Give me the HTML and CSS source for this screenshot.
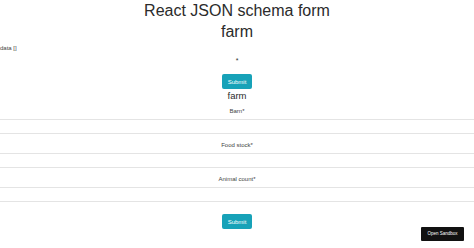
FILE: index.html
```html
<!DOCTYPE html>
<html>
<head>
<meta charset="utf-8">
<link rel="stylesheet" href="styles.css">
</head>
<body>
<div class="app">
  <h1 class="title">React JSON schema form<br>farm</h1>
  <div class="data">data []</div>
  <div class="star">*</div>
  <div class="center"><button class="btn">Submit</button></div>
  <h2 class="legend">farm</h2>
  <div class="fields">
    <div class="field">
      <label class="label">Barn*</label>
      <input class="input" type="text">
    </div>
    <div class="field">
      <label class="label">Food stock*</label>
      <input class="input" type="text">
    </div>
    <div class="field">
      <label class="label">Animal count*</label>
      <input class="input" type="text">
    </div>
  </div>
  <div class="center submit2"><button class="btn">Submit</button></div>
</div>
<a class="sandbox">Open Sandbox</a>
</body>
</html>
```
FILE: styles.css
```css
html, body {
  margin: 0;
  padding: 0;
  background: #fff;
  overflow: hidden;
}
body {
  font-family: "Liberation Sans", Arial, sans-serif;
  color: #333;
  width: 474px;
  height: 248px;
}
.app {
  display: flex;
  flex-direction: column;
  text-align: center;
}
.title {
  margin: 0;
  font-weight: normal;
  font-size: 16px;
  line-height: 21px;
  color: #2b2b2b;
}
.data {
  text-align: left;
  font-size: 6px;
  line-height: 8px;
  margin-top: 2px;
  color: #444;
}
.star {
  font-size: 7px;
  line-height: 8px;
  margin-top: 5px;
}
.center {
  display: flex;
  justify-content: center;
}
.btn {
  margin-top: 9px;
  width: 30px;
  height: 15px;
  padding: 0;
  border: none;
  border-radius: 2px;
  background: #17a2b8;
  color: #fff;
  font-family: "Liberation Sans", Arial, sans-serif;
  font-size: 6px;
}
.legend {
  margin: 1px 0 0;
  font-weight: normal;
  font-size: 9.5px;
  line-height: 12px;
  color: #2b2b2b;
}
.fields {
  display: flex;
  flex-direction: column;
  gap: 7px;
  margin-top: 5px;
}
.field {
  display: flex;
  flex-direction: column;
  gap: 4px;
}
.label {
  font-size: 6px;
  line-height: 8px;
  color: #444;
}
.input {
  box-sizing: border-box;
  height: 15px;
  width: calc(100% + 4px);
  margin: 0 -2px;
  border: 1px solid #e4e4e4;
  background: #fff;
  padding: 0;
}
.submit2 .btn {
  margin-top: 12px;
}
.sandbox {
  position: fixed;
  right: 10px;
  bottom: 7px;
  width: 43px;
  height: 14px;
  background: #111;
  color: #fff;
  font-size: 4.5px;
  line-height: 14px;
  text-align: center;
  border-radius: 1px;
}
```
